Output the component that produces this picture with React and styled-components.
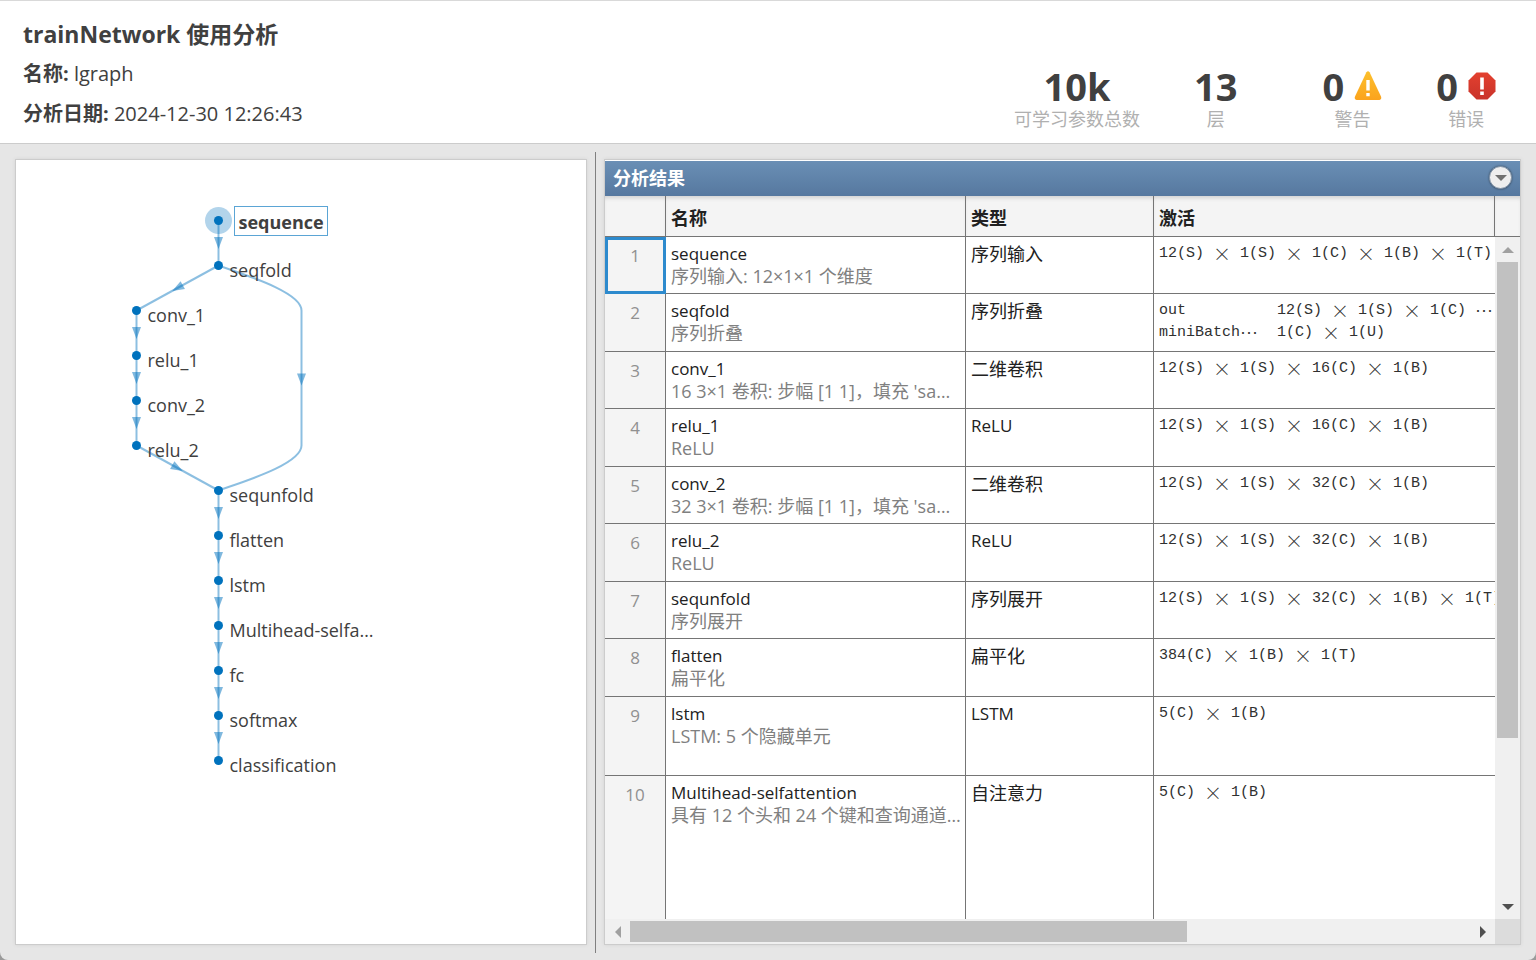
import styled, { createGlobalStyle } from "styled-components"

const GlobalStyle = createGlobalStyle`
    * {
        box-sizing: border-box;
    }
    body {
        margin: 0;
        background-color: #9a9a9a;
        font-family: "Open Sans", "Noto Sans CJK SC", sans-serif;
        color: #404040;
    }
`;

const Page = styled.div`
    height: 100vh;
    display: flex;
    flex-direction: column;
    background-color: #e6e6e6;
    border-top: 1px solid #d9d9d9;
    border-radius: 0 0 8px 8px;
    overflow: hidden;
`;

const Header = styled.header`
    display: flex;
    justify-content: space-between;
    align-items: flex-end;
    padding: 14px 40px 9px 23px;
    background-color: white;
    border-bottom: 1px solid #cccccc;
`;

const Title = styled.h1`
    margin: 0;
    font-size: 23px;
    line-height: 39px;
    font-weight: 700;
`;

const Info = styled.p`
    margin: 0;
    font-size: 20px;
    line-height: 40px;
`;

const Stats = styled.div`
    display: flex;
    gap: 54px;
    margin-bottom: 2px;
`;

const Stat = styled.div`
    display: flex;
    flex-direction: column;
    align-items: center;
    margin-right: ${(props) => (props.$wide ? "31px" : "0")};
`;

const Value = styled.div`
    display: flex;
    align-items: center;
    gap: 10px;
    font-size: 38px;
    line-height: 40px;
    font-weight: 700;
`;

const Caption = styled.div`
    font-size: 18px;
    line-height: 26px;
    color: #b0b0b0;
`;

const Main = styled.main`
    flex: 1;
    min-height: 0;
    display: grid;
    grid-template-columns: 572px 1px minmax(0, 1fr);
    column-gap: 8px;
    padding: 8px 15px 7px;
`;

const Panel = styled.section`
    margin: 7px 0 8px;
    min-height: 0;
    background-color: white;
    border: 1px solid #cccccc;
    box-shadow: 0 0 4px rgba(0, 0, 0, 0.08);
    overflow: hidden;
`;

const ResultPanel = styled(Panel)`
    display: flex;
    flex-direction: column;
    padding-top: 1px;
`;

const Splitter = styled.div`
    background-color: #808080;
`;

const Graph = styled.svg`
    display: block;
`;

const NodeLabel = styled.text`
    font-size: 18px;
    font-weight: ${(props) => (props.$bold ? 700 : 400)};
    fill: #404040;
`;

const PanelTitle = styled.div`
    display: flex;
    align-items: center;
    justify-content: space-between;
    height: 35px;
    padding: 0 8px 2px;
    background: linear-gradient(#6a8fb5, #56789f);
`;

const PanelHeading = styled.h2`
    margin: 0;
    font-size: 18px;
    line-height: 24px;
    font-weight: 700;
    color: white;
`;

const MenuButton = styled.button`
    display: flex;
    align-items: center;
    justify-content: center;
    width: 23px;
    height: 23px;
    padding: 0;
    border: 1px solid #8093a8;
    border-radius: 50%;
    background-color: #eeeeee;
    color: #707070;
    box-shadow: 0 0 2px rgba(0, 0, 0, 0.5);
`;

const Results = styled.div`
    flex: 1;
    min-height: 0;
    display: grid;
    grid-template-columns: minmax(0, 1fr) 25px;
    grid-template-rows: 41px minmax(0, 1fr) 25px;
`;

const TableView = styled.div`
    grid-row: 1 / 3;
    min-height: 0;
    overflow: hidden;
`;

const HeadFill = styled.div`
    background-color: #f4f4f4;
    border-bottom: 1px solid #757575;
    box-shadow: inset 0 4px 4px -2px rgba(0, 0, 0, 0.15);
`;

const Table = styled.table`
    width: 100%;
    table-layout: fixed;
    border-collapse: separate;
    border-spacing: 0;
    color: #212121;
    font-size: 18px;
    line-height: 22px;
`;

const Col = styled.col`
    width: ${(props) => props.$width};
`;

const HeadCell = styled.th`
    height: 41px;
    padding: 4px 5px 0;
    text-align: left;
    font-weight: 700;
    background-color: #f4f4f4;
    border-right: 1px solid #757575;
    border-bottom: 1px solid #757575;
    box-shadow: inset 0 4px 4px -2px rgba(0, 0, 0, 0.15);
`;

const Row = styled.tr`
    height: ${(props) => props.$height}px;
`;

const Cell = styled.td`
    padding: 6px 5px 0;
    vertical-align: top;
    white-space: nowrap;
    overflow: hidden;
    border-right: 1px solid #757575;
    border-bottom: 1px solid #757575;

    &:last-child {
        border-right: none;
    }
`;

const NumberCell = styled.th`
    padding: 8px 0 0;
    vertical-align: top;
    text-align: center;
    font-size: 17px;
    font-weight: 400;
    color: #909090;
    background-color: #f4f4f4;
    border-right: 1px solid ${(props) => (props.$selected ? "#2d8acd" : "#757575")};
    border-bottom: 1px solid ${(props) => (props.$selected ? "#2d8acd" : "#757575")};
    box-shadow: ${(props) =>
        props.$selected ? "inset 3px 3px 0 #2d8acd, inset -2px -2px 0 #2d8acd" : "none"};
`;

const LayerName = styled.div`
    font-size: 17px;
`;

const Description = styled.div`
    font-size: 18px;
    color: #808080;
`;

const Type = styled.div`
    font-size: ${(props) => (props.$latin ? "17px" : "18px")};
`;

const Activation = styled.div`
    display: flex;
    align-items: center;
    height: 22px;
    font-family: "Liberation Mono", "Noto Sans CJK SC", monospace;
    font-size: 15px;
    line-height: 20px;
    white-space: pre;
    color: #303030;
`;

const Port = styled.span`
    flex: none;
    width: 118px;
`;

const Wide = styled.span`
    display: inline-block;
    width: 18px;
    height: 18px;
    text-align: center;
    vertical-align: middle;
    font-family: "Noto Sans CJK SC", sans-serif;
    font-size: 18px;
    line-height: 18px;
    font-weight: 300;
`;

const ScrollBar = styled.div`
    display: flex;
    flex-direction: ${(props) => (props.$vertical ? "column" : "row")};
    background-color: #f0f0f0;
`;

const ScrollButton = styled.button`
    display: flex;
    align-items: center;
    justify-content: center;
    width: 25px;
    height: 25px;
    padding: 0;
    border: none;
    background: none;
    color: ${(props) => (props.disabled ? "#a0a0a0" : "#505050")};
`;

const Track = styled.div`
    flex: 1;
    padding: ${(props) => (props.$vertical ? "0 2px" : "2px 0")};
`;

const Thumb = styled.div`
    width: ${(props) => (props.$vertical ? "100%" : "66.3%")};
    height: ${(props) => (props.$vertical ? "75.3%" : "100%")};
    background-color: #c1c1c1;
`;

const Corner = styled.div`
    background-color: #dcdcdc;
`;

const arrows = {
    up: "M0 9 L6 3 L12 9 Z",
    down: "M0 3 L12 3 L6 9 Z",
    left: "M9 0 L9 12 L3 6 Z",
    right: "M3 0 L9 6 L3 12 Z",
};

const Arrow = ({ direction }) => (
    <svg width="12" height="12" viewBox="0 0 12 12" aria-hidden="true">
        <path d={arrows[direction]} fill="currentColor" />
    </svg>
);

const WarningIcon = () => (
    <svg width="28" height="30" viewBox="0 0 28 30" aria-hidden="true">
        <defs>
            <linearGradient id="warning" x1="0" y1="0" x2="0" y2="1">
                <stop offset="0" stopColor="#fcc02c" />
                <stop offset="1" stopColor="#fba31d" />
            </linearGradient>
        </defs>
        <path
            d="M12.4 1.2 Q14 -0.6 15.6 1.2 L27 25.5 Q28 28.5 25.5 29 L2.5 29 Q0 28.5 1 25.5 Z"
            fill="url(#warning)"
        />
        <path d="M12.3 9 H15.7 V19.5 H12.3 Z M12.3 22 H15.7 V25.3 H12.3 Z" fill="white" />
    </svg>
);

const ErrorIcon = () => (
    <svg width="28" height="28" viewBox="0 0 28 28" aria-hidden="true">
        <defs>
            <linearGradient id="error" x1="0" y1="0" x2="0" y2="1">
                <stop offset="0" stopColor="#e3402f" />
                <stop offset="1" stopColor="#c9332a" />
            </linearGradient>
        </defs>
        <path d="M8.5 0.5 H19.5 L27.5 8.5 V19.5 L19.5 27.5 H8.5 L0.5 19.5 V8.5 Z" fill="url(#error)" />
        <path d="M12.2 5.5 H15.8 V17.5 H12.2 Z M12.2 19.5 H15.8 V23 H12.2 Z" fill="white" />
    </svg>
);

const nodes = [
    { name: "sequence", x: 203, y: 61, selected: true },
    { name: "seqfold", x: 203, y: 106 },
    { name: "conv_1", x: 121, y: 151 },
    { name: "relu_1", x: 121, y: 196 },
    { name: "conv_2", x: 121, y: 241 },
    { name: "relu_2", x: 121, y: 286 },
    { name: "sequnfold", x: 203, y: 331 },
    { name: "flatten", x: 203, y: 376 },
    { name: "lstm", x: 203, y: 421 },
    { name: "Multihead-selfa…", x: 203, y: 466 },
    { name: "fc", x: 203, y: 511 },
    { name: "softmax", x: 203, y: 556 },
    { name: "classification", x: 203, y: 601 },
];

// the arrow head sits in the middle of each edge
const Edge = ({ from, to }) => {
    const angle = (Math.atan2(to.y - from.y, to.x - from.x) * 180) / Math.PI;
    const x = (from.x + to.x) / 2;
    const y = (from.y + to.y) / 2;
    return (
        <g>
            <line x1={from.x} y1={from.y} x2={to.x} y2={to.y} stroke="#0072bd" strokeOpacity="0.45" strokeWidth="2" />
            <path
                d="M-6 -4.5 L6 0 L-6 4.5 Z"
                fill="#0072bd"
                fillOpacity="0.5"
                transform={`translate(${x} ${y}) rotate(${angle})`}
            />
        </g>
    );
};

const NetworkGraph = () => (
    <Graph width="570" height="784" viewBox="0.5 0.5 570 784" role="img" aria-label="lgraph">
        {nodes.slice(1).map((node, i) => (
            <Edge key={node.name} from={nodes[i]} to={node} />
        ))}
        <path
            d="M203 106 C225 114 286 132 286 151 V286 C286 305 225 323 203 331"
            fill="none"
            stroke="#0072bd"
            strokeOpacity="0.45"
            strokeWidth="2"
        />
        <path d="M281.5 214 H290.5 L286 226 Z" fill="#0072bd" fillOpacity="0.5" />
        {nodes.map((node) => (
            <g key={node.name}>
                {node.selected && (
                    <>
                        <circle cx={node.x} cy={node.y} r="13.5" fill="#0072bd" fillOpacity="0.3" />
                        <rect x={node.x + 16} y={node.y - 14} width="93" height="29" fill="white" stroke="#5ba5d5" />
                    </>
                )}
                <circle cx={node.x} cy={node.y} r="4.5" fill="#0072bd" />
                <NodeLabel
                    x={node.x + (node.selected ? 20 : 11)}
                    y={node.y + (node.selected ? 8 : 11)}
                    $bold={node.selected}
                >
                    {node.name}
                </NodeLabel>
            </g>
        ))}
    </Graph>
);

const layers = [
    { name: "sequence", description: "序列输入: 12×1×1 个维度", type: "序列输入", height: 57, activations: [["12(S) × 1(S) × 1(C) × 1(B) × 1(T)"]] },
    {
        name: "seqfold",
        description: "序列折叠",
        type: "序列折叠",
        height: 58,
        activations: [
            ["out", "12(S) × 1(S) × 1(C) …"],
            ["miniBatch…", "1(C) × 1(U)"],
        ],
    },
    { name: "conv_1", description: "16 3×1 卷积: 步幅 [1 1]，填充 'sa…", type: "二维卷积", height: 57, activations: [["12(S) × 1(S) × 16(C) × 1(B)"]] },
    { name: "relu_1", description: "ReLU", type: "ReLU", height: 58, activations: [["12(S) × 1(S) × 16(C) × 1(B)"]] },
    { name: "conv_2", description: "32 3×1 卷积: 步幅 [1 1]，填充 'sa…", type: "二维卷积", height: 57, activations: [["12(S) × 1(S) × 32(C) × 1(B)"]] },
    { name: "relu_2", description: "ReLU", type: "ReLU", height: 58, activations: [["12(S) × 1(S) × 32(C) × 1(B)"]] },
    { name: "sequnfold", description: "序列展开", type: "序列展开", height: 57, activations: [["12(S) × 1(S) × 32(C) × 1(B) × 1(T)"]] },
    { name: "flatten", description: "扁平化", type: "扁平化", height: 58, activations: [["384(C) × 1(B) × 1(T)"]] },
    { name: "lstm", description: "LSTM: 5 个隐藏单元", type: "LSTM", height: 79, activations: [["5(C) × 1(B)"]] },
    { name: "Multihead-selfattention", description: "具有 12 个头和 24 个键和查询通道…", type: "自注意力", height: 180, activations: [["5(C) × 1(B)"]] },
];

const Dimensions = ({ text }) =>
    text.split(/([×…])/).map((part, i) => (i % 2 ? <Wide key={i}>{part}</Wide> : part));

const ResultTable = () => (
    <Table>
        <colgroup>
            <Col $width="61px" />
            <Col $width="300px" />
            <Col $width="188px" />
            <Col $width="auto" />
        </colgroup>
        <thead>
            <tr>
                <HeadCell aria-label="#" />
                <HeadCell scope="col">名称</HeadCell>
                <HeadCell scope="col">类型</HeadCell>
                <HeadCell scope="col">激活</HeadCell>
            </tr>
        </thead>
        <tbody>
            {layers.map((layer, i) => (
                <Row key={layer.name} $height={layer.height}>
                    <NumberCell scope="row" $selected={i === 0}>{i + 1}</NumberCell>
                    <Cell>
                        <LayerName>{layer.name}</LayerName>
                        <Description>{layer.description}</Description>
                    </Cell>
                    <Cell>
                        <Type $latin={/^[A-Za-z]+$/.test(layer.type)}>{layer.type}</Type>
                    </Cell>
                    <Cell>
                        {layer.activations.map((parts) => (
                            <Activation key={parts[0]}>
                                {parts.length > 1 && <Port><Dimensions text={parts[0]} /></Port>}
                                <span><Dimensions text={parts[parts.length - 1]} /></span>
                            </Activation>
                        ))}
                    </Cell>
                </Row>
            ))}
        </tbody>
    </Table>
);

const App = () => {
    return (
        <Page lang="zh-CN">
            <GlobalStyle />
            <Header>
                <div>
                    <Title>trainNetwork 使用分析</Title>
                    <Info><b>名称:</b> lgraph</Info>
                    <Info><b>分析日期:</b> 2024-12-30 12:26:43</Info>
                </div>
                <Stats>
                    <Stat>
                        <Value>10k</Value>
                        <Caption>可学习参数总数</Caption>
                    </Stat>
                    <Stat $wide>
                        <Value>13</Value>
                        <Caption>层</Caption>
                    </Stat>
                    <Stat>
                        <Value>0 <WarningIcon /></Value>
                        <Caption>警告</Caption>
                    </Stat>
                    <Stat>
                        <Value>0 <ErrorIcon /></Value>
                        <Caption>错误</Caption>
                    </Stat>
                </Stats>
            </Header>
            <Main>
                <Panel>
                    <NetworkGraph />
                </Panel>
                <Splitter />
                <ResultPanel>
                    <PanelTitle>
                        <PanelHeading>分析结果</PanelHeading>
                        <MenuButton aria-label="菜单"><Arrow direction="down" /></MenuButton>
                    </PanelTitle>
                    <Results>
                        <TableView>
                            <ResultTable />
                        </TableView>
                        <HeadFill />
                        <ScrollBar $vertical>
                            <ScrollButton disabled aria-label="向上"><Arrow direction="up" /></ScrollButton>
                            <Track $vertical><Thumb $vertical /></Track>
                            <ScrollButton aria-label="向下"><Arrow direction="down" /></ScrollButton>
                        </ScrollBar>
                        <ScrollBar>
                            <ScrollButton disabled aria-label="向左"><Arrow direction="left" /></ScrollButton>
                            <Track><Thumb /></Track>
                            <ScrollButton aria-label="向右"><Arrow direction="right" /></ScrollButton>
                        </ScrollBar>
                        <Corner />
                    </Results>
                </ResultPanel>
            </Main>
        </Page>
    )
}

export default App
